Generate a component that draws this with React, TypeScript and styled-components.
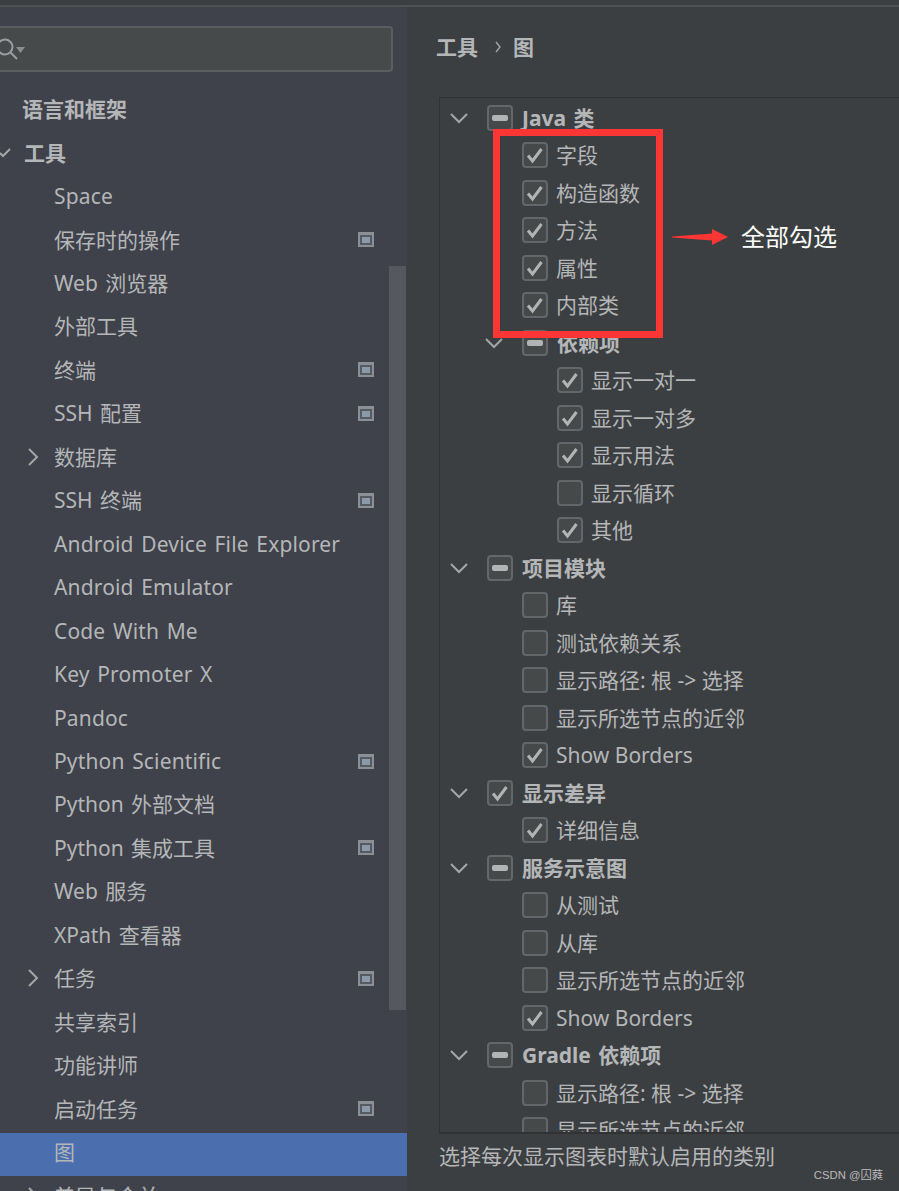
import React from 'react';
import styled, { createGlobalStyle } from 'styled-components';

const GlobalStyle = createGlobalStyle`
  html, body {
    margin: 0;
    padding: 0;
    background: #3c3f41;
  }
`;

const FONT = `"Noto Sans", "Noto Sans CJK SC", sans-serif`;

const Page = styled.div`
  position: relative;
  width: 899px;
  height: 1191px;
  overflow: hidden;
  background: #3c3f41;
  font-family: ${FONT};
  font-size: 21px;
  line-height: 26px;
  font-variant-ligatures: none;
  color: #b4b6b8;
  display: flex;
  flex-direction: column;
`;

const TopEdge = styled.div`
  flex: none;
  height: 5px;
  background: #3c3f41;
  border-bottom: 2px solid #4f5152;
`;

const Body = styled.div`
  flex: 1;
  min-height: 0;
  display: flex;
`;

const Sidebar = styled.aside`
  position: relative;
  flex: none;
  width: 407px;
  background: #3f424a;
  overflow: hidden;
`;

const SearchBox = styled.div`
  box-sizing: border-box;
  width: 393px;
  height: 46px;
  margin: 19px 0 0 0;
  border: 2px solid #5b5e60;
  border-left: none;
  border-radius: 0 4px 4px 0;
  background: #474a4b;
  display: flex;
  align-items: center;
`;

const NavList = styled.div`
  margin-top: 18px;
`;

const NavRow = styled.div<{ $selected?: boolean }>`
  box-sizing: border-box;
  height: 43.46px;
  display: flex;
  align-items: center;
  padding-right: 33px;
  padding-bottom: 5px;
  background: ${(p) => (p.$selected ? '#4b6eaf' : 'transparent')};
`;

const Arrow = styled.span`
  flex: none;
  width: 54px;
  display: flex;
  justify-content: flex-end;
  padding-right: 12px;
  box-sizing: border-box;
`;

const NavHead = styled.span<{ $left: number }>`
  font-weight: 700;
  margin-left: ${(p) => p.$left}px;
`;

const NavLabel = styled.span<{ $latin: boolean }>`
  flex: 1;
  white-space: nowrap;
  word-spacing: 2px;
  letter-spacing: ${(p) => (p.$latin ? '0.15px' : '0')};
`;

const Scrollbar = styled.div`
  position: absolute;
  top: 259px;
  right: 1px;
  width: 17px;
  height: 744px;
  background: #56585f;
`;

const Main = styled.main`
  flex: 1;
  min-width: 0;
  display: flex;
  flex-direction: column;
  padding-left: 32px;
`;

const Breadcrumb = styled.div`
  flex: none;
  height: 90px;
  margin-left: -3px;
  display: flex;
  align-items: center;
  padding-bottom: 10px;
  box-sizing: border-box;
  font-weight: 700;
  color: #b4b6b8;
`;

const CrumbArrow = styled.svg`
  margin: 0 12px 0 17px;
`;

const Tree = styled.div`
  flex: none;
  height: 1037px;
  box-sizing: border-box;
  border-top: 1px solid #323232;
  border-left: 1px solid #323232;
  border-bottom: 2px solid #323232;
  overflow: hidden;
  padding-top: 1px;
`;

const TreeRow = styled.div<{ $depth: number }>`
  height: 37.5px;
  display: flex;
  align-items: center;
  padding-left: ${(p) => p.$depth * 35 + 10}px;
  white-space: nowrap;
`;

const Toggle = styled.span`
  flex: none;
  width: 37px;
  display: flex;
  align-items: center;
`;

const Spacer = styled.span`
  flex: none;
  width: 37px;
`;

const Box = styled.span`
  flex: none;
  box-sizing: border-box;
  width: 26px;
  height: 26px;
  margin-right: 8px;
  border: 2px solid #646769;
  border-radius: 4px;
  background: #45494a;
  display: flex;
  align-items: center;
  justify-content: center;
`;

const Group = styled.span`
  font-weight: 700;
  margin-left: 1px;
  word-spacing: 2px;
`;

const Footer = styled.div`
  flex: none;
  height: 46px;
  display: flex;
  align-items: center;
  padding-bottom: 2px;
  box-sizing: border-box;
`;

const Watermark = styled.div`
  position: absolute;
  right: 16px;
  bottom: 9px;
  font-family: "Liberation Sans", "Noto Sans CJK SC", sans-serif;
  font-size: 11.3px;
  line-height: 14px;
  color: #b9babb;
`;

const RedFrame = styled.div`
  position: absolute;
  left: 493px;
  top: 129px;
  width: 170px;
  height: 209px;
  box-sizing: border-box;
  border: 7px solid #fc3535;
`;

const Callout = styled.div`
  position: absolute;
  left: 671px;
  top: 222px;
  display: flex;
  align-items: center;
  gap: 12px;
  font-size: 24px;
  line-height: 30px;
  color: #ffffff;
`;

const Chevron = ({ open }: { open?: boolean }) => (
  <svg width="18" height="18" viewBox="0 0 18 18" fill="none" stroke="#a4a6a8" strokeWidth="2">
    <path d={open ? 'M1 5l8 8 8-8' : 'M5 1l8 8-8 8'} />
  </svg>
);

const ProjectIcon = styled.span`
  flex: none;
  box-sizing: border-box;
  width: 16px;
  height: 15px;
  border: 2px solid #8a9096;
  border-top-width: 3px;
  background: #8a9aa8;
  box-shadow: inset 0 0 0 2px #565a62;
`;

const Check = () => (
  <svg width="18" height="18" viewBox="0 0 18 18" fill="none" stroke="#b1b3b4" strokeWidth="3">
    <path d="M2 9.5l4.5 5.5L15.5 3" />
  </svg>
);

const Dash = () => (
  <svg width="16" height="6" viewBox="0 0 16 6">
    <rect x="0" y="0" width="16" height="6" rx="2" fill="#b1b3b4" />
  </svg>
);

type Nav = { label: string; head?: boolean; arrow?: 'open' | 'closed'; icon?: boolean; selected?: boolean };

const navItems: Nav[] = [
  { label: '语言和框架', head: true },
  { label: '工具', head: true, arrow: 'open' },
  { label: 'Space' },
  { label: '保存时的操作', icon: true },
  { label: 'Web 浏览器' },
  { label: '外部工具' },
  { label: '终端', icon: true },
  { label: 'SSH 配置', icon: true },
  { label: '数据库', arrow: 'closed' },
  { label: 'SSH 终端', icon: true },
  { label: 'Android Device File Explorer' },
  { label: 'Android Emulator' },
  { label: 'Code With Me' },
  { label: 'Key Promoter X' },
  { label: 'Pandoc' },
  { label: 'Python Scientific', icon: true },
  { label: 'Python 外部文档' },
  { label: 'Python 集成工具', icon: true },
  { label: 'Web 服务' },
  { label: 'XPath 查看器' },
  { label: '任务', arrow: 'closed', icon: true },
  { label: '共享索引' },
  { label: '功能讲师' },
  { label: '启动任务', icon: true },
  { label: '图', selected: true },
  { label: '差异与合并', arrow: 'closed' },
];

type Item = { label: string; depth: number; state: 'on' | 'off' | 'mixed'; group?: boolean };

const treeItems: Item[] = [
  { label: 'Java 类', depth: 0, state: 'mixed', group: true },
  { label: '字段', depth: 1, state: 'on' },
  { label: '构造函数', depth: 1, state: 'on' },
  { label: '方法', depth: 1, state: 'on' },
  { label: '属性', depth: 1, state: 'on' },
  { label: '内部类', depth: 1, state: 'on' },
  { label: '依赖项', depth: 1, state: 'mixed', group: true },
  { label: '显示一对一', depth: 2, state: 'on' },
  { label: '显示一对多', depth: 2, state: 'on' },
  { label: '显示用法', depth: 2, state: 'on' },
  { label: '显示循环', depth: 2, state: 'off' },
  { label: '其他', depth: 2, state: 'on' },
  { label: '项目模块', depth: 0, state: 'mixed', group: true },
  { label: '库', depth: 1, state: 'off' },
  { label: '测试依赖关系', depth: 1, state: 'off' },
  { label: '显示路径: 根 -> 选择', depth: 1, state: 'off' },
  { label: '显示所选节点的近邻', depth: 1, state: 'off' },
  { label: 'Show Borders', depth: 1, state: 'on' },
  { label: '显示差异', depth: 0, state: 'on', group: true },
  { label: '详细信息', depth: 1, state: 'on' },
  { label: '服务示意图', depth: 0, state: 'mixed', group: true },
  { label: '从测试', depth: 1, state: 'off' },
  { label: '从库', depth: 1, state: 'off' },
  { label: '显示所选节点的近邻', depth: 1, state: 'off' },
  { label: 'Show Borders', depth: 1, state: 'on' },
  { label: 'Gradle 依赖项', depth: 0, state: 'mixed', group: true },
  { label: '显示路径: 根 -> 选择', depth: 1, state: 'off' },
  { label: '显示所选节点的近邻', depth: 1, state: 'off' },
];

export default function App() {
  return (
    <Page>
      <GlobalStyle />
      <TopEdge />
      <Body>
        <Sidebar>
          <SearchBox>
            <svg width="26" height="24" viewBox="0 0 26 24" fill="none">
              <circle cx="5" cy="10" r="7.5" stroke="#9a9da0" strokeWidth="2" />
              <path d="M10.5 15.5L17 22" stroke="#9a9da0" strokeWidth="2" />
              <path d="M16 10h9l-4.5 6z" fill="#8c8f92" />
            </svg>
          </SearchBox>
          <NavList>
            {navItems.map((item) => (
              <NavRow key={item.label} $selected={item.selected}>
                {item.head ? (
                  <>
                    {item.arrow && (
                      <svg width="12" height="10" viewBox="0 0 12 10" fill="none" stroke="#a4a6a8" strokeWidth="2">
                        <path d="M0 5l3 3 7-7" />
                      </svg>
                    )}
                    <NavHead $left={item.arrow ? 12 : 22}>{item.label}</NavHead>
                  </>
                ) : (
                  <>
                    <Arrow>{item.arrow && <Chevron />}</Arrow>
                    <NavLabel $latin={/^[ -~]+$/.test(item.label)}>{item.label}</NavLabel>
                    {item.icon && <ProjectIcon />}
                  </>
                )}
              </NavRow>
            ))}
          </NavList>
          <Scrollbar />
        </Sidebar>
        <Main>
          <Breadcrumb>
            工具
            <CrumbArrow width="6" height="12" viewBox="0 0 6 12" fill="none" stroke="#a4a6a8" strokeWidth="1.4">
              <path d="M1 1l4 5-4 5" />
            </CrumbArrow>
            图
          </Breadcrumb>
          <Tree>
            {treeItems.map((item, i) => (
              <TreeRow key={i} $depth={item.depth}>
                {item.group ? (
                  <Toggle>
                    <Chevron open />
                  </Toggle>
                ) : (
                  <Spacer />
                )}
                <Box>
                  {item.state === 'on' && <Check />}
                  {item.state === 'mixed' && <Dash />}
                </Box>
                {item.group ? <Group>{item.label}</Group> : item.label}
              </TreeRow>
            ))}
          </Tree>
          <Footer>选择每次显示图表时默认启用的类别</Footer>
        </Main>
      </Body>
      <RedFrame />
      <Callout>
        <svg width="58" height="16" viewBox="0 0 58 16">
          <path d="M1 7.5L41 4.5V0l16 8-16 8v-4.5L1 8.5z" fill="#fc3535" />
        </svg>
        全部勾选
      </Callout>
      <Watermark>CSDN @囚蕤</Watermark>
    </Page>
  );
}
